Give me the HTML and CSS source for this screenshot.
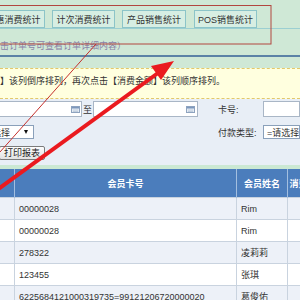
FILE: index.html
```html
<!DOCTYPE html>
<html>
<head>
<meta charset="utf-8">
<link rel="stylesheet" href="styles.css">
</head>
<body>
<div class="page">
  <div class="top">
    <div class="strip"> <!-- report tabs -->
      <div class="tab">优惠消费统计</div>
      <div class="tab">计次消费统计</div>
      <div class="tab wide">产品销售统计</div>
      <div class="tab">POS销售统计</div>
    </div>
    <div class="hint">（点击订单号可查看订单详细内容）</div>
  </div>

  <div class="notice">】该列倒序排列，再次点击【消费金额】该列顺序排列。</div>

  <div class="filter">
    <div class="row">
      <div class="range">
        <span class="field date from"><svg class="cal" width="9" height="7" viewBox="0 0 9 7"><rect x="0.5" y="0.5" width="8" height="6" fill="#e4ebf3" stroke="#8ea3bf"/><rect x="1" y="1" width="7" height="1.5" fill="#7d98bd"/><path d="M2 4h5M2 5.5h5" stroke="#b7c6d8" stroke-width="0.8"/></svg></span>
        <span class="to">至</span>
        <span class="field date till"><svg class="cal" width="9" height="7" viewBox="0 0 9 7"><rect x="0.5" y="0.5" width="8" height="6" fill="#e4ebf3" stroke="#8ea3bf"/><rect x="1" y="1" width="7" height="1.5" fill="#7d98bd"/><path d="M2 4h5M2 5.5h5" stroke="#b7c6d8" stroke-width="0.8"/></svg></span>
      </div>
      <span class="label">卡号:</span>
      <span class="field"></span>
    </div>
    <div class="row short">
      <div class="range">
        <span class="select pick">请选择<i class="arrow"></i></span>
      </div>
      <span class="label">付款类型:</span>
      <span class="select">=请选择=</span>
    </div>
    <div class="row short">
      <div class="range">
        <button class="print">打印报表</button>
      </div>
    </div>
  </div>

  <table class="grid">
    <colgroup>
      <col style="width:44px"><col style="width:222px"><col style="width:51px"><col style="width:40px"><col style="width:60px">
    </colgroup>
    <tr><th></th><th>会员卡号</th><th>会员姓名</th><th>消费金额</th><th></th></tr>
    <tr class="odd"><td></td><td>00000028</td><td>Rim</td><td></td><td></td></tr>
    <tr><td></td><td>00000028</td><td>Rim</td><td></td><td></td></tr>
    <tr class="odd"><td></td><td>278322</td><td>凌莉莉</td><td></td><td></td></tr>
    <tr><td></td><td>123455</td><td>张琪</td><td></td><td></td></tr>
    <tr class="odd"><td></td><td>6225684121000319735=99121206720000020</td><td>葛俊佑</td><td></td><td></td></tr>
  </table>

  <!-- annotation drawn over the screenshot -->
  <svg class="marks" width="300" height="300" viewBox="0 0 300 300">
    <rect x="-10" y="5.5" width="281" height="38.5" fill="none" stroke="#b2463f" stroke-width="1"/>
    <line x1="96" y1="44" x2="0" y2="152" stroke="#c4302c" stroke-width="1"/>
    <line x1="-3" y1="190" x2="158" y2="73" stroke="#ea1a1f" stroke-width="4"/>
    <polygon points="174,61 161,80 151,66" fill="#ea1a1f"/>
  </svg>
</div>
</body>
</html>
```

FILE: styles.css
```css
html, body { margin:0; overflow:hidden; }

body
{
  font: 9px "Liberation Sans", "Noto Sans CJK SC", sans-serif;
  color:#333;
}

.page
{
  position:relative;
  width:300px;
  height:300px;
  overflow:hidden;
  background:#cfe8d6;
}

/* top: tabs + hint */

.top
{
  height:55px;
  border-bottom:2px solid #5b82a6;
}

.strip
{
  display:flex;
  gap:7px;
  height:18px;
  padding-top:10px;
  margin-left:-18px;
  border-bottom:1px solid #9ccfd2;
}

.strip > .tab
{
  box-sizing:border-box;
  width:63px;
  height:18px;
  display:flex;
  align-items:center;
  justify-content:center;
  border:1px solid #8cc4c8;
  background:#d7eee3;
  color:#333;
}
.strip > .tab.wide { width:64px; margin-right:1px; }

.hint
{
  margin:13px 0 0 -18px;
  line-height:9px;
  color:#8a82a8;
  white-space:nowrap;
}

/* yellow notice */

.notice
{
  margin-top:11px;
  padding:7px 0 12px;
  line-height:10px;
  background:#ffffdf;
  border-top:1px dashed #e2c86c;
  border-bottom:1px dashed #e2c86c;
  white-space:nowrap;
}

/* filter form */

.filter
{
  height:61px;
  padding:2px 0 3px;
  background:#e8eef6;
  border-bottom:4px solid #cbe8d3;
}

.row
{
  display:grid;
  grid-template-columns:238px 45px 1fr;
  align-items:center;
  height:16px;
  margin-left:-20px;
}
.row.short { height:14px; margin-top:8px; }
.row.short:last-child { margin-top:7px; }

.range { display:flex; align-items:center; }

.field
{
  box-sizing:border-box;
  height:16px;
  background:#fff;
  border:1px solid #a9b6c6;
}
.field.date
{
  display:flex;
  align-items:center;
  justify-content:flex-end;
}
.field.from { width:102px; padding-right:1px; }
.field.till { width:105px; padding-right:2px; }

.to { width:10px; padding-left:1px; }

.label { white-space:nowrap; }

.select
{
  box-sizing:border-box;
  height:14px;
  display:flex;
  align-items:center;
  padding-left:3px;
  background:#fff;
  border:1px solid #8aa0ba;
  white-space:nowrap;
  overflow:hidden;
}
.select.pick { width:54px; padding-left:2px; }

.arrow
{
  margin:0 5px 0 auto;
  border-top:4px solid #111;
  border-left:2.5px solid transparent;
  border-right:2.5px solid transparent;
}

.print
{
  height:14px;
  margin-left:19px;
  padding:0 4px;
  font:9px "Liberation Sans", "Noto Sans CJK SC", sans-serif;
  line-height:12px;
  color:#222;
  border:1px solid #7b7b7b;
  border-radius:2px;
  background:linear-gradient(#fdfdfd, #e2e2e2);
}

/* result table */

.grid
{
  margin-left:-30px;
  width:417px;
  table-layout:fixed;
  border-collapse:collapse;
  font:inherit;
}

.grid th
{
  height:28px;
  padding:0;
  background:#4b7dbc;
  color:#fff;
  font-weight:bold;
  text-align:center;
  border-left:1px solid #a3bfe0;
  white-space:nowrap;
}

.grid td
{
  height:21px;
  padding:0 0 0 4px;
  border:1px solid #c9d3df;
  background:#fff;
  white-space:nowrap;
  overflow:hidden;
}
.grid tr.odd td { background:#edf1f8; }

.marks
{
  position:absolute;
  left:0;
  top:0;
  pointer-events:none;
}
```
